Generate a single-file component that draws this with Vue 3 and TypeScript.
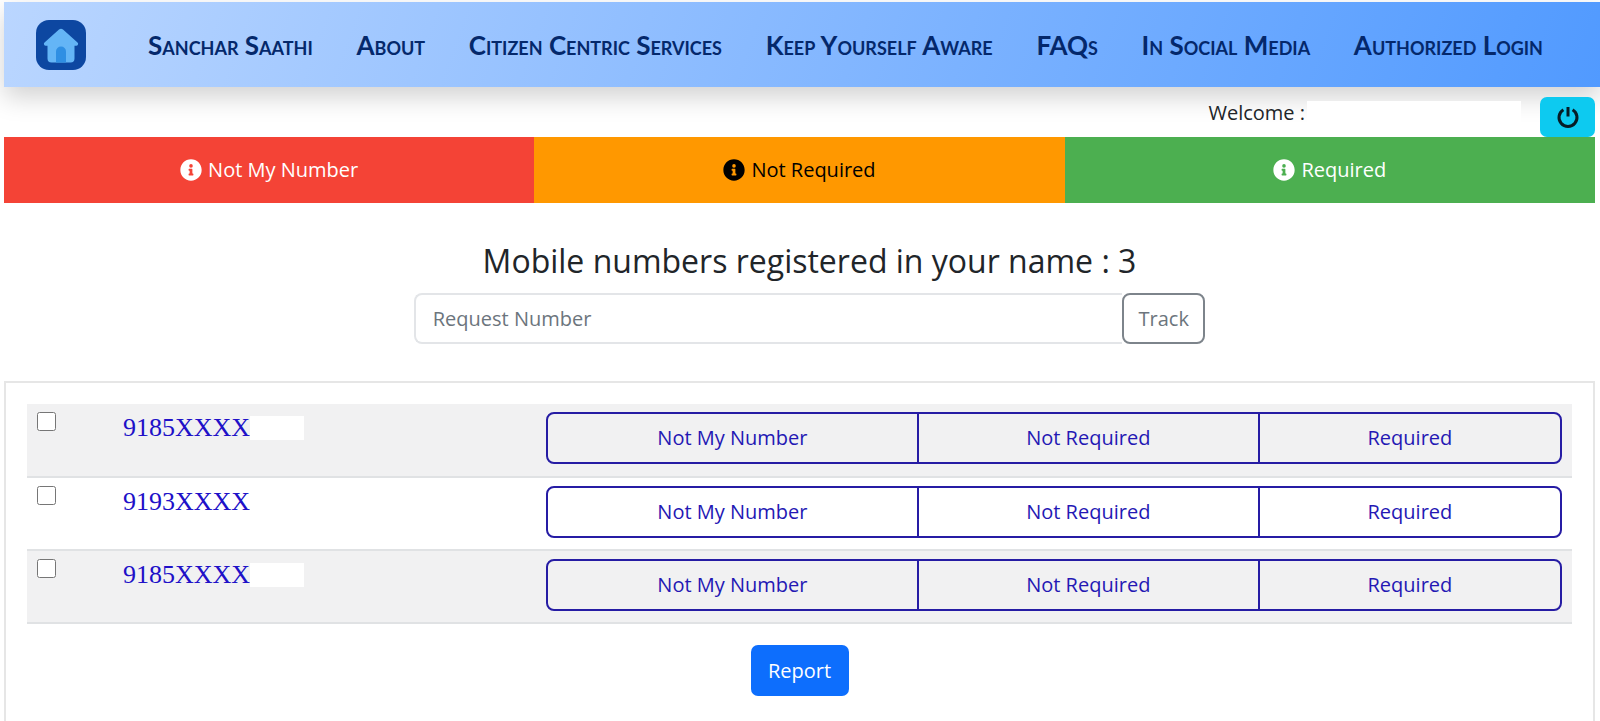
<script setup lang="ts">
import { ref } from 'vue'

interface MobileEntry {
  id: number
  digits: string
  checked: boolean
}

const navItems: string[] = [
  'Sanchar Saathi',
  'About',
  'Citizen Centric Services',
  'Keep Yourself Aware',
  'FAQs',
  'In Social Media',
  'Authorized Login',
]

const legend = [
  { label: 'Not My Number', tone: 'red' },
  { label: 'Not Required', tone: 'orange' },
  { label: 'Required', tone: 'green' },
]

const entries = ref<MobileEntry[]>([
  { id: 1, digits: '9185XXXX', checked: false },
  { id: 2, digits: '9193XXXX', checked: false },
  { id: 3, digits: '9185XXXX', checked: false },
])

const requestNumber = ref('')
</script>

<template>
  <div class="page">
    <header class="navbar">
      <a class="home" href="#" aria-label="Home">
        <svg viewBox="0 0 50 50" aria-hidden="true">
          <rect width="50" height="50" rx="13" fill="#0d47a1" />
          <path
            d="M23 9.600a3 3 0 0 1 4 0L41.500 22.500a1.900 1.900 0 0 1-1.300 3.300H38.500V38.500a4 4 0 0 1-4 4h-19a4 4 0 0 1-4-4V25.800h-1.700A1.900 1.900 0 0 1 8.500 22.500Z"
            fill="#64b5f6"
          />
          <path d="M20 42.500V31.500a5 5 0 0 1 10 0v11Z" fill="#2f8fe3" />
        </svg>
      </a>
      <nav class="links">
        <a v-for="item in navItems" :key="item" href="#">{{ item }}</a>
      </nav>
    </header>

    <div class="account">
      <span class="welcome">Welcome : <span class="user-name"></span></span>
      <button class="power" type="button" aria-label="Log out">
        <svg viewBox="0 0 24 24" aria-hidden="true">
          <path d="M7.400 4.700a9 9 0 1 0 9.200 0" />
          <path d="M12 2v9.500" />
        </svg>
      </button>
    </div>

    <div class="legend">
      <div v-for="item in legend" :key="item.label" :class="['legend-item', item.tone]">
        <svg viewBox="0 0 512 512" aria-hidden="true">
          <path
            fill="currentColor"
            d="M256 8C119 8 8 119 8 256s111 248 248 248 248-111 248-248S393 8 256 8zm0 110a42 42 0 1 1 0 84 42 42 0 0 1 0-84zm56 254c0 6.600-5.400 12-12 12h-88c-6.600 0-12-5.400-12-12v-24c0-6.600 5.400-12 12-12h12v-64h-12c-6.600 0-12-5.400-12-12v-24c0-6.600 5.400-12 12-12h64c6.600 0 12 5.400 12 12v100h12c6.600 0 12 5.400 12 12z"
          />
        </svg>
        <span>{{ item.label }}</span>
      </div>
    </div>

    <main>
      <div class="intro">
        <h1>Mobile numbers registered in your name : {{ entries.length }}</h1>

        <form class="track" @submit.prevent>
          <input v-model="requestNumber" type="text" placeholder="Request Number" aria-label="Request Number" />
          <button type="submit">Track</button>
        </form>
      </div>

      <section class="card">
        <table>
          <tbody>
            <tr v-for="entry in entries" :key="entry.id">
              <td class="pick">
                <input :id="`pick-${entry.id}`" v-model="entry.checked" type="checkbox" :aria-label="entry.digits" />
              </td>
              <td class="number">
                <label :for="`pick-${entry.id}`">{{ entry.digits }}<span class="hidden-digits"></span></label>
              </td>
              <td class="actions">
                <div class="group" role="group">
                  <button type="button">Not My Number</button>
                  <button type="button">Not Required</button>
                  <button type="button">Required</button>
                </div>
              </td>
            </tr>
          </tbody>
        </table>
        <button class="report" type="button">Report</button>
      </section>
    </main>
  </div>
</template>

<style>
body {
  margin: 0;
  background: #fff;
  overflow-x: hidden;
}
</style>

<style scoped>
.page {
  display: flex;
  flex-direction: column;
  box-sizing: border-box;
  min-height: 100vh;
  padding: 2px 5px 0 4px;
  color: #212529;
  font-family: "Open Sans", "Noto Sans", sans-serif;
  font-size: 20px;
  line-height: 32px;
}

button,
input {
  box-sizing: border-box;
  font: inherit;
}

.navbar {
  display: flex;
  align-items: center;
  box-sizing: border-box;
  height: 85px;
  margin-right: -5px;
  padding: 0 57px 0 32px;
  background: linear-gradient(110deg, #bad6ff 0%, #519aff 100%);
  box-shadow: 0 10px 24px rgba(0, 0, 0, 0.18);
}

.home {
  flex: none;
  width: 50px;
  height: 50px;
  margin-right: 62px;
}

.home svg {
  display: block;
}

.links {
  display: flex;
  flex: 1;
  justify-content: space-between;
}

.links a {
  color: #04286b;
  font-family: Lato, sans-serif;
  font-size: 26px;
  font-weight: 700;
  font-variant: small-caps;
  text-decoration: none;
  white-space: nowrap;
}

.account {
  position: relative;
  display: flex;
  justify-content: flex-end;
  height: 40px;
  margin-top: 10px;
}

.welcome {
  display: flex;
  gap: 2px;
  margin-right: 19px;
}

.user-name {
  width: 214px;
  height: 34px;
  margin-top: 4px;
  background: #fff;
}

.power {
  width: 55px;
  height: 40px;
  padding: 0;
  border: 0;
  border-radius: 7px;
  background: #0dcaf0;
}

.power svg {
  display: block;
  width: 24px;
  height: 24px;
  margin: 0 auto;
  fill: none;
  stroke: #061c26;
  stroke-width: 3;
}

.legend {
  display: grid;
  grid-template-columns: repeat(3, 1fr);
}

.legend-item {
  display: flex;
  align-items: center;
  justify-content: center;
  gap: 6px;
  height: 66px;
}

.legend-item svg {
  width: 22px;
  height: 22px;
}

.red {
  background: #f44336;
  color: #fff;
}

.orange {
  background: #ff9800;
  color: #000;
}

.green {
  background: #4caf50;
  color: #fff;
}

main {
  display: flex;
  flex: 1;
  flex-direction: column;
}

.intro {
  padding-left: 20px;
}

h1 {
  margin: 36px 0 10px;
  font-size: 32px;
  font-weight: 400;
  line-height: 44px;
  text-align: center;
}

.track {
  display: flex;
  width: calc(50% + 6px);
  margin: 0 auto 37px;
}

.track input {
  flex: 1;
  min-width: 0;
  height: 51px;
  padding: 0 17px;
  border: 2px solid #e3e5e8;
  border-right: 0;
  border-radius: 8px 0 0 8px;
  background: #fff;
}

.track input::placeholder {
  color: #6c757d;
  opacity: 1;
}

.track button {
  width: 83px;
  padding: 0;
  border: 2px solid #7d848b;
  border-radius: 8px;
  background: #fff;
  color: #6c757d;
}

.card {
  flex: 1;
  padding: 21px 21px 24px;
  border: 2px solid #e6e6e6;
  border-bottom: 0;
}

table {
  width: 100%;
  border-collapse: collapse;
  table-layout: fixed;
}

td {
  box-sizing: border-box;
  height: 73px;
  padding: 8px 10px;
  border-bottom: 2px solid #e0e2e4;
  vertical-align: top;
}

tr:nth-child(odd) {
  background: #f1f1f2;
}

.pick {
  width: 86px;
}

.pick input {
  display: block;
  width: 19px;
  height: 19px;
  margin: 0;
}

.number {
  width: 423px;
}

.number label {
  display: flex;
  align-items: center;
  color: #2010c8;
  font-family: "Liberation Serif", serif;
  font-size: 26px;
}

.hidden-digits {
  width: 54px;
  height: 24px;
  background: #fff;
}

.group {
  display: grid;
  grid-template-columns: 371fr 343fr 304fr;
  box-sizing: border-box;
  height: 52px;
  border: 2px solid #261ca4;
  border-radius: 8px;
}

.group button {
  padding: 0;
  border: 0;
  background: transparent;
  color: #2418b4;
}

.group button + button {
  border-left: 2px solid #261ca4;
}

.report {
  display: block;
  width: 98px;
  height: 51px;
  margin: 21px auto 0;
  padding: 0;
  border: 0;
  border-radius: 7px;
  background: #0d6efd;
  color: #fff;
}
</style>
